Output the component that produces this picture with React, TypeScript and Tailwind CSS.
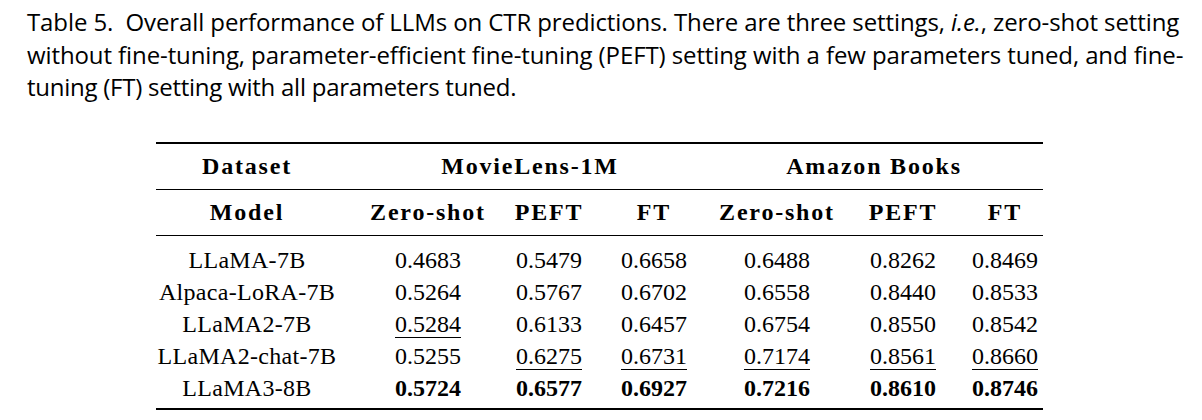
const rows: { model: string; cells: string[]; under?: number[]; bold?: boolean }[] = [
  { model: "LLaMA-7B", cells: ["0.4683", "0.5479", "0.6658", "0.6488", "0.8262", "0.8469"] },
  { model: "Alpaca-LoRA-7B", cells: ["0.5264", "0.5767", "0.6702", "0.6558", "0.8440", "0.8533"] },
  { model: "LLaMA2-7B", cells: ["0.5284", "0.6133", "0.6457", "0.6754", "0.8550", "0.8542"], under: [0] },
  { model: "LLaMA2-chat-7B", cells: ["0.5255", "0.6275", "0.6731", "0.7174", "0.8561", "0.8660"], under: [1, 2, 3, 4, 5] },
  { model: "LLaMA3-8B", cells: ["0.5724", "0.6577", "0.6927", "0.7216", "0.8610", "0.8746"], bold: true },
];

// per-column nudges so each column centers where the reference does
const shift = ["pl-[29px]", "pl-[7px]", "pr-[10px]", "pr-[2px]", "pl-[12px]", "pl-[13px]"];
const subHeads = ["Zero-shot", "PEFT", "FT", "Zero-shot", "PEFT", "FT"];

const cell = "flex items-center justify-center whitespace-nowrap";

export default function App() {
  return (
    <div className="h-[420px] w-[1202px] bg-white text-black">
      <div className="pl-[27px] pt-[6px] font-['Open_Sans',sans-serif] text-[24px] leading-[32.5px]">
        <p className="whitespace-nowrap tracking-[-0.1px]">
          Table 5.&nbsp; Overall performance of LLMs on CTR predictions. There are three settings, <i>i.e.</i>, zero-shot setting
        </p>
        <p className="whitespace-nowrap tracking-[-0.1px]">
          without fine-tuning, parameter-efficient fine-tuning (PEFT) setting with a few parameters tuned, and fine-
        </p>
        <p className="whitespace-nowrap tracking-[-0.25px]">tuning (FT) setting with all parameters tuned.</p>
      </div>

      <div className="ml-[156px] mt-[38px] w-[887px] border-y-2 border-black font-['Liberation_Serif',serif] text-[24px]">
        <div className="grid h-[46px] grid-cols-[182px_151px_113px_114px_124px_114px_89px] border-b border-black font-bold tracking-[1.8px]">
          <div className={cell}>Dataset</div>
          <div className={`${cell} col-span-3 pl-[6px]`}>MovieLens-1M</div>
          <div className={`${cell} col-span-3 pr-[11px]`}>Amazon Books</div>
        </div>
        <div className="grid h-[46px] grid-cols-[182px_151px_113px_114px_124px_114px_89px] border-b border-black font-bold tracking-[1.8px]">
          <div className={cell}>Model</div>
          {subHeads.map((h, i) => (
            <div key={i} className={`${cell} ${shift[i]}`}>
              {h}
            </div>
          ))}
        </div>
        <div className="pt-[6px] pb-[6px]">
          {rows.map((r) => (
            <div key={r.model} className="grid h-[32px] grid-cols-[182px_151px_113px_114px_124px_114px_89px]">
              <div className={`${cell} tracking-[0.3px]`}>{r.model}</div>
              {r.cells.map((v, i) => (
                <div key={i} className={`${cell} ${shift[i]} ${r.bold ? "font-bold" : ""}`}>
                  <span className={r.under?.includes(i) ? "underline decoration-1 underline-offset-[5px]" : ""}>{v}</span>
                </div>
              ))}
            </div>
          ))}
        </div>
      </div>
    </div>
  );
}
